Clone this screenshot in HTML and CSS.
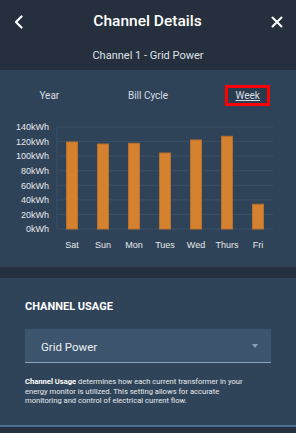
FILE: index.html
```html
<!DOCTYPE html>
<html lang="en">
  <head>
    <meta charset="UTF-8" />
    <meta name="viewport" content="width=device-width, initial-scale=1.0" />
    <title>Channel Details</title>
    <link rel="stylesheet" href="styles.css">
  </head>
  <body>
    <div class="header">
      <div class="top-bar">
        <svg class="icon back" width="10" height="14" viewBox="0 0 10 14">
          <polyline points="7.5,1.5 2,7 7.5,12.5" fill="none" stroke="#fff" stroke-width="2.2" stroke-linecap="round" stroke-linejoin="round" />
        </svg>
        <h1 class="title">Channel Details</h1>
        <svg class="icon close" width="12" height="12" viewBox="0 0 12 12">
          <path d="M1.5 1.5 L10.5 10.5 M10.5 1.5 L1.5 10.5" fill="none" stroke="#fff" stroke-width="2" stroke-linecap="round" />
        </svg>
      </div>
      <div class="subtitle">Channel 1 - Grid Power</div>
    </div>

    <div class="chart-card">
      <div class="tabs">
        <div class="tab">Year</div>
        <div class="tab">Bill Cycle</div>
        <div class="tab"><span class="tab-active">Week</span></div>
      </div>
      <svg class="chart" width="296" height="136" viewBox="0 0 296 136">
        <g class="grid">
          <line x1="57" y1="7" x2="273" y2="7" />
          <line x1="57" y1="21.57" x2="273" y2="21.57" />
          <line x1="57" y1="36.14" x2="273" y2="36.14" />
          <line x1="57" y1="50.71" x2="273" y2="50.71" />
          <line x1="57" y1="65.29" x2="273" y2="65.29" />
          <line x1="57" y1="79.86" x2="273" y2="79.86" />
          <line x1="57" y1="94.43" x2="273" y2="94.43" />
          <line x1="57" y1="109" x2="273" y2="109" />
          <line x1="57" y1="7" x2="57" y2="109" />
        </g>
        <g class="y-labels">
          <text x="49" y="10.3">140kWh</text>
          <text x="49" y="24.9">120kWh</text>
          <text x="49" y="39.4">100kWh</text>
          <text x="49" y="54">80kWh</text>
          <text x="49" y="68.6">60kWh</text>
          <text x="49" y="83.2">40kWh</text>
          <text x="49" y="97.7">20kWh</text>
          <text x="49" y="112.3">0kWh</text>
        </g>
        <g class="bars">
          <rect x="66.5" y="22" width="11" height="87" />
          <rect x="97.5" y="24" width="11" height="85" />
          <rect x="128.5" y="23.3" width="11" height="85.7" />
          <rect x="159.5" y="33" width="11" height="76" />
          <rect x="190.5" y="20" width="11" height="89" />
          <rect x="221.5" y="16.3" width="11" height="92.7" />
          <rect x="252.5" y="84.3" width="11" height="24.7" />
        </g>
        <g class="x-labels">
          <text x="72" y="127.5">Sat</text>
          <text x="103" y="127.5">Sun</text>
          <text x="134" y="127.5">Mon</text>
          <text x="165" y="127.5">Tues</text>
          <text x="196" y="127.5">Wed</text>
          <text x="227" y="127.5">Thurs</text>
          <text x="258" y="127.5">Fri</text>
        </g>
      </svg>
    </div>

    <div class="band"></div>

    <div class="usage">
      <h2 class="usage-title">CHANNEL USAGE</h2>
      <div class="select">
        <span class="select-value">Grid Power</span>
        <span class="caret"></span>
      </div>
      <p class="usage-text">
        <b>Channel Usage</b> determines how each current transformer in your
        energy monitor is utilized. This setting allows for accurate
        monitoring and control of electrical current flow.
      </p>
    </div>
    <div class="footer"></div>
  </body>
</html>
```

FILE: styles.css
```css
body {
  margin: 0;
  width: 296px;
  height: 433px;
  overflow: hidden;
  background: #253140;
  font-family: Roboto, "Liberation Sans", sans-serif;
  color: #fff;
}
.header {
  height: 70px;
  background: #252f3d;
}
.top-bar {
  height: 42px;
  display: flex;
  align-items: center;
  justify-content: space-between;
  padding: 0 13px 0 14px;
}
.title {
  margin: 0;
  font-size: 15.5px;
  font-weight: 500;
  line-height: 42px;
}
.icon {
  display: block;
}
.back {
  margin-top: 1px;
}
.close {
  margin-top: 1px;
}
.subtitle {
  text-align: center;
  font-size: 11px;
  line-height: 28px;
  color: #dfe3e8;
}

.chart-card {
  height: 197px;
  background: #2f4358;
  display: flex;
  flex-direction: column;
}
.tabs {
  display: flex;
  padding-top: 15px;
  height: 35px;
}
.tab {
  flex: 1;
  text-align: center;
  font-size: 10px;
  line-height: 21px;
  color: #d9dee4;
}
.tab-active {
  display: inline-block;
  vertical-align: top;
  padding: 0 7px;
  line-height: 15px;
  border: 3px solid #ff0000;
  background: #2a3b4e;
  text-decoration: underline;
  margin-left: 2px;
}
.chart {
  display: block;
}
.grid line {
  stroke: #3b5169;
  stroke-width: 1;
}
.y-labels text {
  fill: #e6e9ed;
  font-family: "Liberation Sans", Arial, sans-serif;
  font-size: 9px;
  text-anchor: end;
}
.x-labels text {
  fill: #e6e9ed;
  font-family: "Liberation Sans", Arial, sans-serif;
  font-size: 9px;
  text-anchor: middle;
}
.bars rect {
  fill: #d4822f;
  stroke: #b8702a;
  stroke-width: 1;
}

.band {
  height: 11px;
  background: #253140;
}

.usage {
  height: 147px;
  background: #2f4459;
  padding: 0 25px;
  border-bottom: 2px solid #4d6e8e;
  overflow: hidden;
}
.usage-title {
  margin: 0;
  padding-top: 22px;
  font-size: 11px;
  font-weight: 700;
  line-height: 14px;
}
.select {
  margin-top: 15px;
  height: 33px;
  background: #3d556c;
  border-bottom: 1.5px solid #8aa5bd;
  display: flex;
  align-items: center;
  justify-content: space-between;
  padding: 0 13px 0 16px;
}
.select-value {
  font-size: 11.5px;
  color: #eef1f4;
  padding-top: 2px;
}
.caret {
  width: 0;
  height: 0;
  border-left: 3.5px solid transparent;
  border-right: 3.5px solid transparent;
  border-top: 4px solid #8c9fb3;
  margin-top: 1px;
}
.usage-text {
  margin: 14px 0 0;
  width: 226px;
  font-size: 7.6px;
  line-height: 9.6px;
  color: #e8ebee;
}
.usage-text b {
  font-weight: 700;
  color: #fff;
}
.footer {
  height: 6px;
  background: #253140;
}
```
